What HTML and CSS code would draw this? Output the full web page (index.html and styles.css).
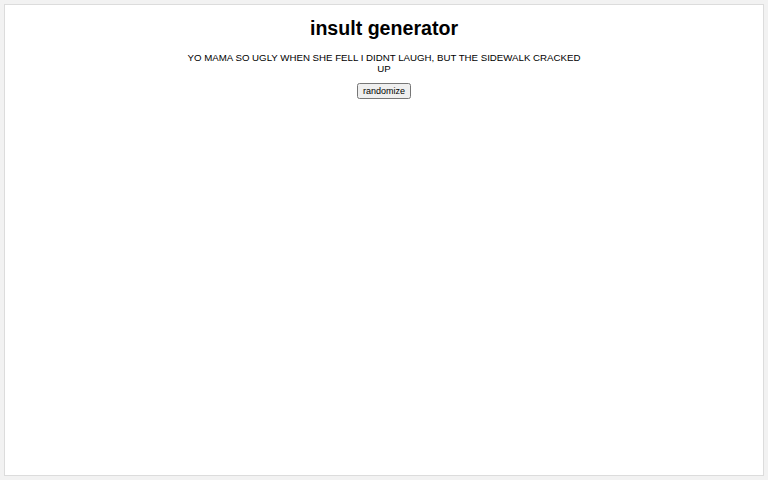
FILE: index.html
```html
<!DOCTYPE html>
<html>
<head>
<meta charset="utf-8">
<title>insult generator</title>
<link rel="stylesheet" href="styles.css">
</head>
<body>
<main class="card">
  <h1 class="title">insult generator</h1>
  <p class="insult">YO MAMA SO UGLY WHEN SHE FELL I DIDNT LAUGH, BUT THE SIDEWALK CRACKED UP</p>
  <button class="randomize" type="button">randomize</button>
</main>
</body>
</html>
```
FILE: styles.css
```css
html, body {
  margin: 0;
  height: 100%;
}

body {
  background: #f2f2f2;
  padding: 4px;
  box-sizing: border-box;
  font-family: "Liberation Sans", Arial, sans-serif;
  color: #000;
}

.card {
  box-sizing: border-box;
  height: 100%;
  background: #fff;
  border: 1px solid #dcdcdc;
  display: flex;
  flex-direction: column;
  align-items: center;
  padding-top: 11px;
}

.title {
  margin: 0;
  font-size: 19.6px;
  font-weight: bold;
  line-height: 24px;
}

.insult {
  margin: 12px 0 0;
  max-width: 400px;
  font-size: 9.7px;
  line-height: 11px;
  text-align: center;
}

.randomize {
  margin-top: 9px;
  font-family: "Liberation Sans", Arial, sans-serif;
  font-size: 9px;
  padding: 1px 4px;
}
```
